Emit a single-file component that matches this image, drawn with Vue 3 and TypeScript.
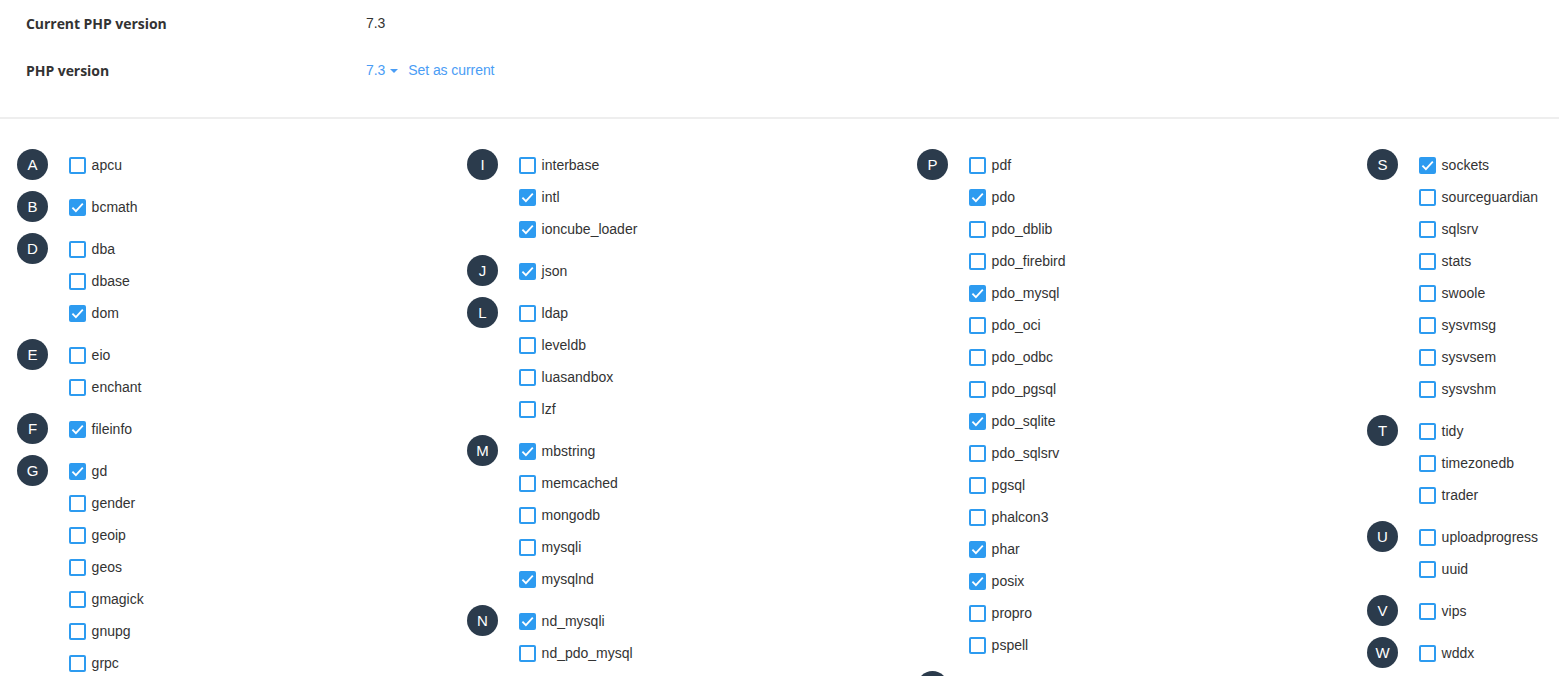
<script setup lang="ts">
interface Ext { name: string; on?: boolean }
interface Group { letter: string; items: Ext[] }
const e = (s: string): Ext[] =>
  s.split(' ').map((t) => (t.startsWith('+') ? { name: t.slice(1), on: true } : { name: t }))
const columns: Group[][] = [
  [
    { letter: 'A', items: e('apcu') },
    { letter: 'B', items: e('+bcmath') },
    { letter: 'D', items: e('dba dbase +dom') },
    { letter: 'E', items: e('eio enchant') },
    { letter: 'F', items: e('+fileinfo') },
    { letter: 'G', items: e('+gd gender geoip geos gmagick gnupg grpc') },
  ],
  [
    { letter: 'I', items: e('interbase +intl +ioncube_loader') },
    { letter: 'J', items: e('+json') },
    { letter: 'L', items: e('ldap leveldb luasandbox lzf') },
    { letter: 'M', items: e('+mbstring memcached mongodb mysqli +mysqlnd') },
    { letter: 'N', items: e('+nd_mysqli nd_pdo_mysql') },
  ],
  [
    { letter: 'P', items: e('pdf +pdo pdo_dblib pdo_firebird +pdo_mysql pdo_oci pdo_odbc pdo_pgsql +pdo_sqlite pdo_sqlsrv pgsql phalcon3 +phar +posix propro pspell') },
    { letter: '', items: [] },
  ],
  [
    { letter: 'S', items: e('+sockets sourceguardian sqlsrv stats swoole sysvmsg sysvsem sysvshm') },
    { letter: 'T', items: e('tidy timezonedb trader') },
    { letter: 'U', items: e('uploadprogress uuid') },
    { letter: 'V', items: e('vips') },
    { letter: 'W', items: e('wddx') },
  ],
]
</script>

<template>
  <div class="page">
    <section class="summary">
      <div class="info first">
        <div class="label">Current PHP version</div>
        <div class="value">7.3</div>
      </div>
      <div class="info">
        <div class="label">PHP version</div>
        <div class="value links">
          <a class="link ver">7.3<span class="caret"></span></a>
          <a class="link">Set as current</a>
        </div>
      </div>
    </section>
    <main class="grid">
      <div v-for="(col, i) in columns" :key="i" class="col">
        <div v-for="g in col" :key="g.letter" class="group">
          <div class="badge">{{ g.letter }}</div>
          <div class="items">
            <label v-for="it in g.items" :key="it.name" class="item">
              <span class="box" :class="{ on: it.on }">
                <svg v-if="it.on" viewBox="0 0 17 17" width="17" height="17">
                  <path d="M3.4 8.6 L6.9 12.2 L13.8 4.6" fill="none" stroke="#fff" stroke-width="1.8" />
                </svg>
              </span>
              <span class="name">{{ it.name }}</span>
            </label>
          </div>
        </div>
      </div>
    </main>
  </div>
</template>

<style scoped>
.page { height: 676px; overflow: hidden; background: #fff; color: #333; font-family: "Liberation Sans", Arial, sans-serif; font-size: 14px; }
.summary { height: 117px; padding-top: 13px; box-sizing: border-box; }
.info { display: flex; align-items: center; height: 20px; margin-bottom: 27px; padding-left: 26px; }
.label { width: 340px; font-family: "Open Sans", sans-serif; font-weight: 700; font-size: 14px; letter-spacing: -0.05px; color: #333; }
.value { color: #333; letter-spacing: -0.1px; }
.links { display: flex; align-items: center; gap: 10px; }
.link { color: #4a9df5; cursor: pointer; letter-spacing: -0.07px; }
.ver { display: inline-flex; align-items: center; }
.caret { width: 0; height: 0; margin-left: 5px; margin-top: 1px; border-left: 4px solid transparent; border-right: 4px solid transparent; border-top: 4px solid #4a9df5; }
.grid { display: grid; grid-template-columns: repeat(4, 450px); padding: 30px 0 0 17px; border-top: 2px solid #eee; }
.group { display: flex; margin-bottom: 10px; }
.badge { flex: none; width: 31px; height: 31px; border-radius: 50%; background: #2b3b4c; color: #fff; display: flex; align-items: center; justify-content: center; font-size: 15px; }
.items { margin-left: 21px; }
.item { display: flex; align-items: center; height: 32px; }
.box { flex: none; width: 17px; height: 17px; box-sizing: border-box; border: 2px solid #2d9bf0; border-radius: 2px; position: relative; }
.box.on { background: #2d9bf0; }
.box svg { position: absolute; left: -2px; top: -2px; }
.name { margin-left: 5.6px; color: #333; }
</style>
